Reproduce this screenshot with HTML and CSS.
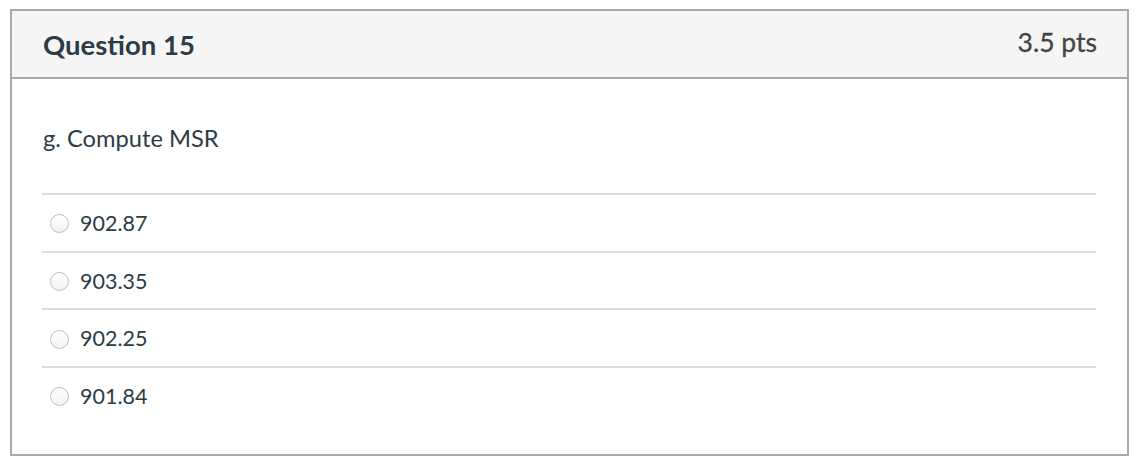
FILE: index.html
```html
<!DOCTYPE html>
<html>
<head>
<meta charset="utf-8">
<link rel="stylesheet" href="styles.css">
</head>
<body>
<div class="page">
  <div class="question">
    <div class="header">
      <span class="title">Question 15</span>
      <span class="pts">3.5 pts</span>
    </div>
    <div class="content">
      <p class="prompt">g. Compute MSR</p>
      <div class="answers">
        <label class="answer"><span class="radio"></span><span class="label">902.87</span></label>
        <label class="answer"><span class="radio"></span><span class="label">903.35</span></label>
        <label class="answer"><span class="radio"></span><span class="label">902.25</span></label>
        <label class="answer"><span class="radio"></span><span class="label">901.84</span></label>
      </div>
    </div>
  </div>
</div>
</body>
</html>
```

FILE: styles.css
```css
html, body {
  margin: 0;
  padding: 0;
  background: #ffffff;
}
body {
  font-family: Lato, "Liberation Sans", sans-serif;
  color: #2d3b45;
}
.page {
  padding: 9px 11px 10px 10px;
}
.question {
  border: 2px solid #a9a9a9;
  box-sizing: border-box;
  height: 447px;
}
.header {
  display: flex;
  justify-content: space-between;
  align-items: center;
  height: 66px;
  background: #f5f5f5;
  border-bottom: 2px solid #a9a9a9;
  padding: 0 30px 0 31px;
}
.title {
  font-weight: 700;
  font-size: 27.5px;
}
.pts {
  font-size: 26.5px;
  color: #444444;
  font-weight: 400;
  margin-bottom: 4px;
  -webkit-text-stroke: 0.3px #444444;
}
.content {
  padding: 0 31px 0 30px;
}
.prompt {
  margin: 0;
  box-sizing: border-box;
  padding: 44px 0 0 1px;
  height: 114px;
  font-size: 23.7px;
  line-height: 30px;
}
.answers {
  display: flex;
  flex-direction: column;
}
.answer {
  display: flex;
  align-items: center;
  height: 55.7px;
  border-top: 2px solid #dddddd;
  font-size: 21.5px;
}
.radio {
  width: 17px;
  height: 17px;
  border: 1px solid #c0c0c0;
  border-radius: 50%;
  margin: 2px 11px 0 8px;
  background: linear-gradient(#ffffff, #f2f2f2);
}
.label {
  line-height: 24px;
}
```
